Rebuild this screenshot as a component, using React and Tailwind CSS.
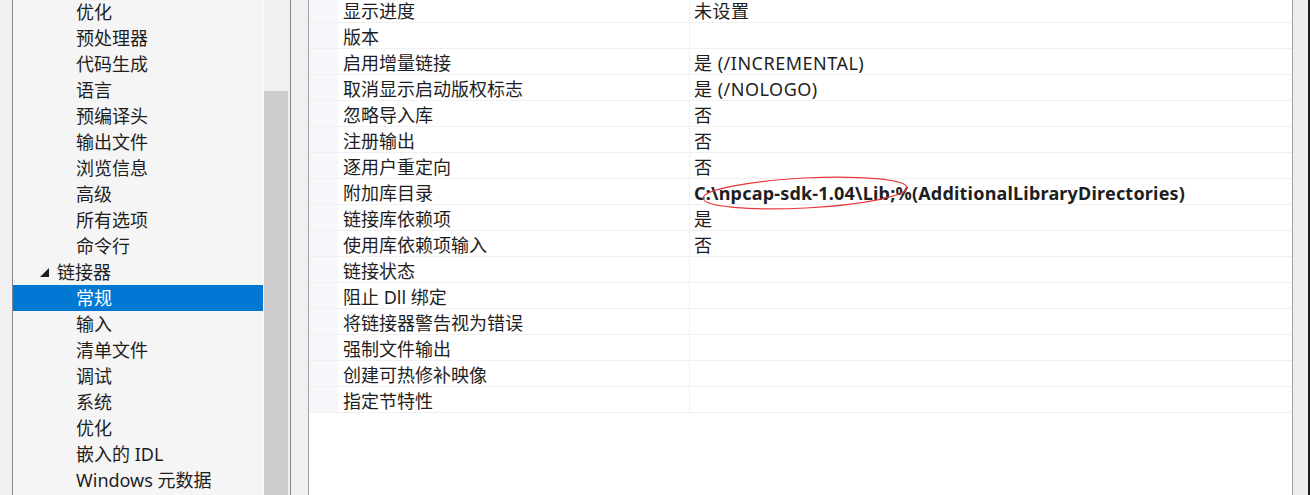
import React from 'react';

const treeItems = [
    { label: '优化', level: 2 },
    { label: '预处理器', level: 2 },
    { label: '代码生成', level: 2 },
    { label: '语言', level: 2 },
    { label: '预编译头', level: 2 },
    { label: '输出文件', level: 2 },
    { label: '浏览信息', level: 2 },
    { label: '高级', level: 2 },
    { label: '所有选项', level: 2 },
    { label: '命令行', level: 2 },
    { label: '链接器', level: 1, open: true },
    { label: '常规', level: 2, selected: true },
    { label: '输入', level: 2 },
    { label: '清单文件', level: 2 },
    { label: '调试', level: 2 },
    { label: '系统', level: 2 },
    { label: '优化', level: 2 },
    { label: '嵌入的 IDL', level: 2 },
    { label: 'Windows 元数据', level: 2 },
];

const props = [
    ['显示进度', '未设置'],
    ['版本', ''],
    ['启用增量链接', '是 (/INCREMENTAL)'],
    ['取消显示启动版权标志', '是 (/NOLOGO)'],
    ['忽略导入库', '否'],
    ['注册输出', '否'],
    ['逐用户重定向', '否'],
    ['附加库目录', 'C:\\npcap-sdk-1.04\\Lib;%(AdditionalLibraryDirectories)', true],
    ['链接库依赖项', '是'],
    ['使用库依赖项输入', '否'],
    ['链接状态', ''],
    ['阻止 Dll 绑定', ''],
    ['将链接器警告视为错误', ''],
    ['强制文件输出', ''],
    ['创建可热修补映像', ''],
    ['指定节特性', ''],
];

const TreeRow = ({ item }) => (
    <div
        className={`flex h-[26px] items-center leading-[26px] ${
            item.selected ? 'bg-[#0078d4] text-white' : 'text-[#1e1e1e]'
        } ${item.level === 1 ? 'pl-[27px]' : 'pl-[63px]'}`}
    >
        {item.open && (
            <svg width="9" height="9" viewBox="0 0 9 9" className="mr-[8px]">
                <polygon points="9,0 9,9 0,9" fill="#1e1e1e" />
            </svg>
        )}
        <span className="whitespace-nowrap">{item.label}</span>
    </div>
);

const PropRow = ({ name, value, bold }) => (
    <div className="flex h-[26px] border-b border-[#f0f0f0]">
        <div className="w-[29px] shrink-0 bg-[#f5f7fb]" />
        <div className="flex w-[352px] shrink-0 items-center border-r border-[#f0f0f0] pl-[5px] pt-[3px] whitespace-nowrap">
            {name}
        </div>
        <div
            className={`flex flex-1 items-center pl-[4px] pt-[3px] whitespace-nowrap ${
                bold ? 'font-bold tracking-[0.2px]' : 'tracking-[0.5px]'
            }`}
        >
            {value}
        </div>
    </div>
);

export default function App() {
    return (
        <div className="relative flex h-[495px] w-[1310px] overflow-hidden bg-white font-['Noto_Sans','Noto_Sans_CJK_SC',sans-serif] text-[18px] text-[#1e1e1e]">
            {/* left chrome */}
            <div className="w-[12px] bg-[#f0f0f0]" />
            <div className="w-px bg-[#828790]" />

            {/* category tree */}
            <div className="w-[250px] bg-[#f5f5f5]">
                <div className="-mt-[1px]">
                    {treeItems.map((item, i) => (
                        <TreeRow key={i} item={item} />
                    ))}
                </div>
            </div>
            <div className="w-px bg-[#fafafa]" />
            <div className="flex w-[24px] flex-col">
                <div className="h-[91px] bg-[#f0f0f0]" />
                <div className="flex-1 bg-[#cdcdcd]" />
            </div>
            <div className="w-[2px] bg-[#f0f0f0]" />
            <div className="w-px bg-[#828790]" />
            <div className="w-[17px] bg-[#f0f0f0]" />
            <div className="w-px bg-[#a0a0a0]" />

            {/* property grid */}
            <div className="flex-1 bg-white">
                <div className="-mt-[3px]">
                    {props.map(([name, value, bold], i) => (
                        <PropRow key={i} name={name} value={value} bold={bold} />
                    ))}
                </div>
            </div>
            <div className="w-px bg-[#a0a0a0]" />
            <div className="w-[15px] bg-[#eeeeee]" />
            <div className="w-[2px] bg-[#1e1e1e]" />

            {/* red hand-drawn annotation */}
            <svg className="pointer-events-none absolute left-0 top-0" width="1310" height="495">
                <ellipse
                    cx="805"
                    cy="193"
                    rx="102"
                    ry="15"
                    transform="rotate(-3 805 193)"
                    fill="none"
                    stroke="#e8383d"
                    strokeWidth="1.2"
                />
            </svg>
        </div>
    );
}
